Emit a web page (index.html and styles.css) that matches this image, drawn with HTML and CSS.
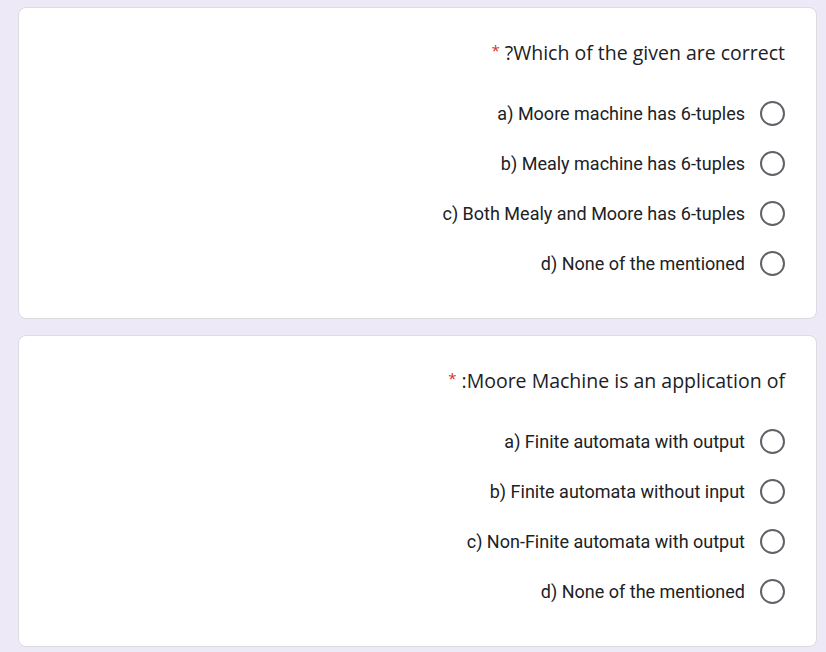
FILE: index.html
```html
<!DOCTYPE html>
<html>
<head>
<meta charset="utf-8">
<link rel="stylesheet" href="styles.css">
</head>
<body>
<div class="page">
  <div class="card">
    <div class="title"><span class="req">*</span><span>?Which of the given are correct</span></div>
    <div class="options">
      <div class="opt"><span class="label">a) Moore machine has 6-tuples</span><span class="radio"></span></div>
      <div class="opt"><span class="label">b) Mealy machine has 6-tuples</span><span class="radio"></span></div>
      <div class="opt"><span class="label">c) Both Mealy and Moore has 6-tuples</span><span class="radio"></span></div>
      <div class="opt"><span class="label">d) None of the mentioned</span><span class="radio"></span></div>
    </div>
  </div>
  <div class="card">
    <div class="title"><span class="req">*</span><span>:Moore Machine is an application of</span></div>
    <div class="options">
      <div class="opt"><span class="label">a) Finite automata with output</span><span class="radio"></span></div>
      <div class="opt"><span class="label">b) Finite automata without input</span><span class="radio"></span></div>
      <div class="opt"><span class="label">c) Non-Finite automata with output</span><span class="radio"></span></div>
      <div class="opt"><span class="label">d) None of the mentioned</span><span class="radio"></span></div>
    </div>
  </div>
</div>
</body>
</html>
```

FILE: styles.css
```css
html, body {
  margin: 0;
  padding: 0;
  background: #ede9f7;
}
.page {
  padding: 7px 9px 0 18px;
  display: flex;
  flex-direction: column;
  gap: 16px;
}
.card {
  background: #fff;
  border: 1px solid #dadce0;
  border-radius: 8px;
  padding: 33px 31px 30px 24px;
  display: flex;
  flex-direction: column;
  align-items: flex-end;
  gap: 23px;
}
.title {
  font-family: "Open Sans", sans-serif;
  font-size: 19.5px;
  line-height: 24px;
  color: #202124;
  display: flex;
  align-items: flex-start;
  gap: 5px;
}
.req {
  color: #d93025;
  font-size: 15px;
  line-height: 18px;
}
.options {
  display: flex;
  flex-direction: column;
  align-items: flex-end;
}
.opt {
  height: 50px;
  display: flex;
  align-items: center;
  gap: 15px;
}
.label {
  font-family: Roboto, sans-serif;
  font-size: 18px;
  color: #202124;
}
.radio {
  width: 21px;
  height: 21px;
  border: 2px solid #5f6368;
  border-radius: 50%;
}
```
